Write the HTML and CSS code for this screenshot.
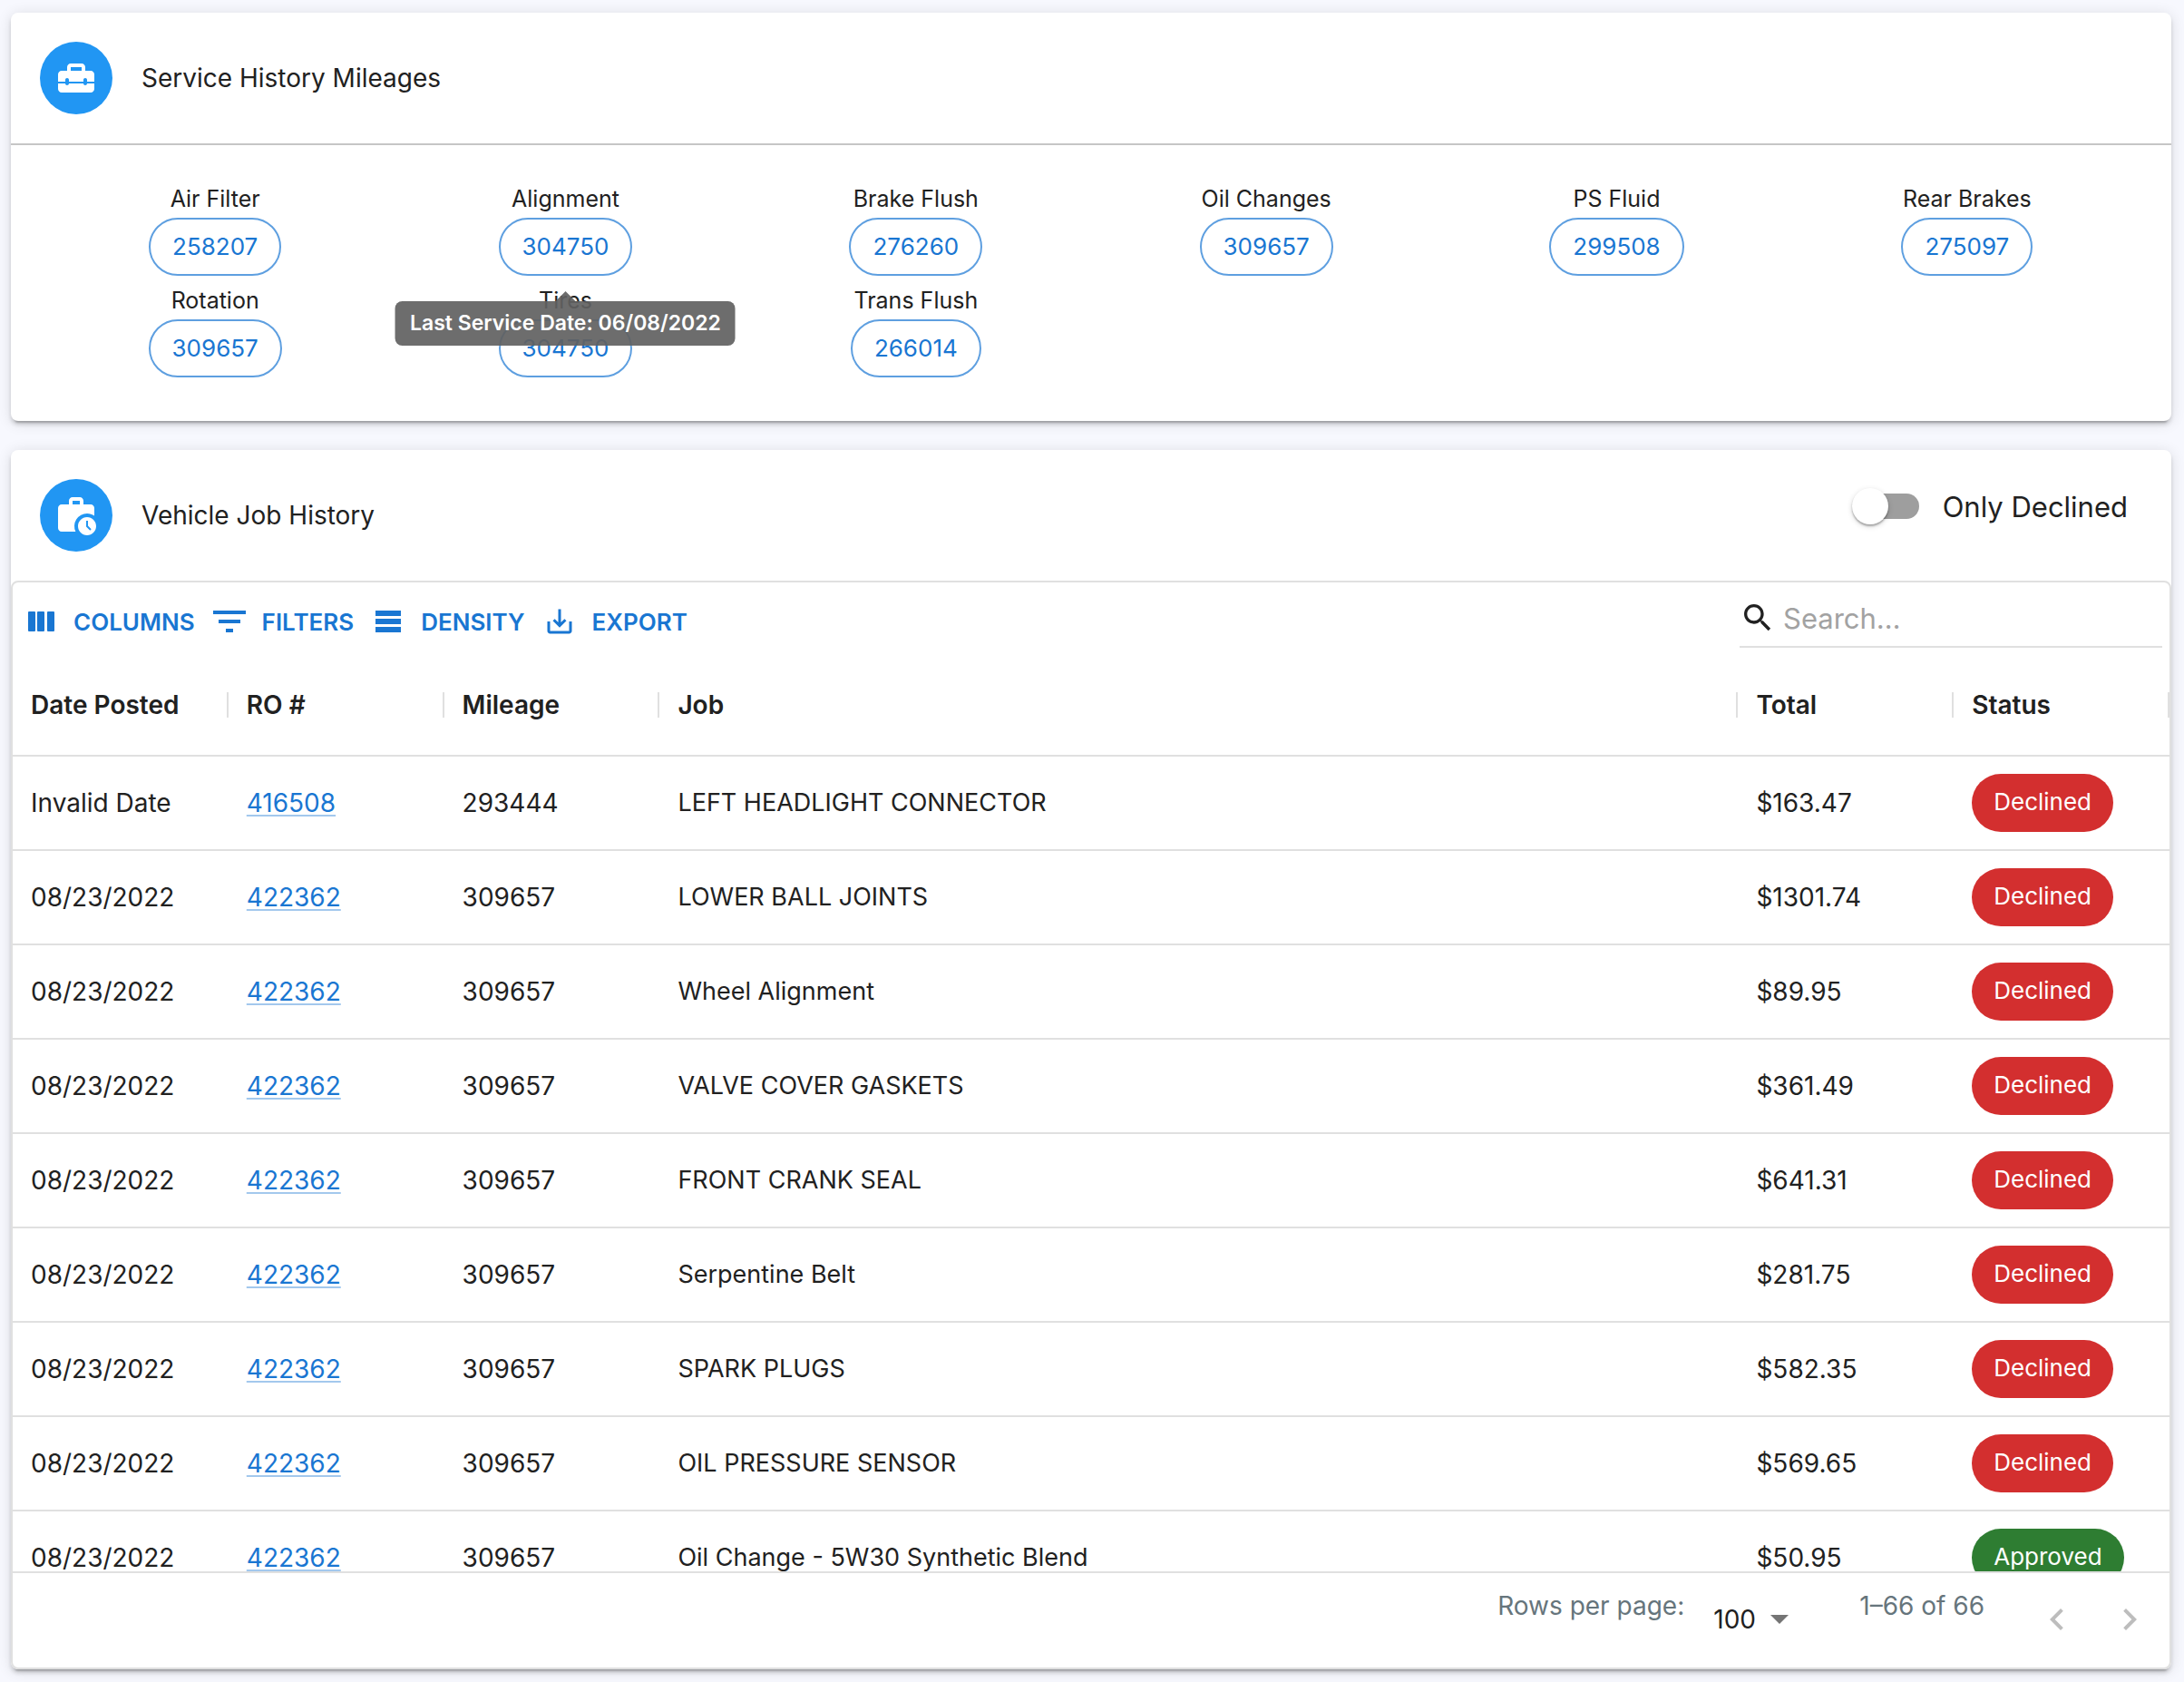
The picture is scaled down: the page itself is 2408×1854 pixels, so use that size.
FILE: index.html
```html
<!DOCTYPE html>
<html lang="en">
<head>
<meta charset="utf-8">
<title>Vehicle Service History</title>
<link rel="stylesheet" href="styles.css">
</head>
<body>
<main class="page">
  <section class="card">
    <header class="card-header card-header-ruled">
      <span class="avatar"><svg class="avatar-icon" viewBox="0 0 24 24" aria-hidden="true"><path d="M17 8V6c0-1.100-.9-2-2-2H9c-1.100 0-2 .9-2 2v2H4c-1.100 0-2 .9-2 2v4h4v-1c0-.55.45-1 1-1s1 .45 1 1v1h8v-1c0-.55.45-1 1-1s1 .45 1 1v1h4v-4c0-1.100-.9-2-2-2h-3zM9 6h6v2H9V6z"/><path d="M18 15c0 .55-.45 1-1 1s-1-.45-1-1H8c0 .55-.45 1-1 1s-1-.45-1-1H2v3c0 1.100.9 2 2 2h16c1.100 0 2-.9 2-2v-3h-4z"/></svg></span>
      <h2 class="card-title">Service History Mileages</h2>
    </header>
    <div class="mileages">
      <div class="mileage"><span class="mileage-label">Air Filter</span><button class="chip chip-outline" type="button">258207</button></div>
      <div class="mileage"><span class="mileage-label">Alignment</span><button class="chip chip-outline" type="button" aria-describedby="tip">304750</button><span class="tooltip" role="tooltip" id="tip">Last Service Date: 06/08/2022</span></div>
      <div class="mileage"><span class="mileage-label">Brake Flush</span><button class="chip chip-outline" type="button">276260</button></div>
      <div class="mileage"><span class="mileage-label">Oil Changes</span><button class="chip chip-outline" type="button">309657</button></div>
      <div class="mileage"><span class="mileage-label">PS Fluid</span><button class="chip chip-outline" type="button">299508</button></div>
      <div class="mileage"><span class="mileage-label">Rear Brakes</span><button class="chip chip-outline" type="button">275097</button></div>
      <div class="mileage"><span class="mileage-label">Rotation</span><button class="chip chip-outline" type="button">309657</button></div>
      <div class="mileage"><span class="mileage-label">Tires</span><button class="chip chip-outline" type="button">304750</button></div>
      <div class="mileage"><span class="mileage-label">Trans Flush</span><button class="chip chip-outline" type="button">266014</button></div>
    </div>
  </section>

  <section class="card card-fill">
    <header class="card-header">
      <span class="avatar"><svg class="avatar-icon" viewBox="0 0 24 24" aria-hidden="true"><path d="M18 11c1.490 0 2.870.47 4 1.260V8c0-1.110-.89-2-2-2h-4V4c0-1.110-.89-2-2-2h-4c-1.110 0-2 .89-2 2v2H4c-1.110 0-1.990.89-1.990 2L2 19c0 1.110.89 2 2 2h7.680A6.995 6.995 0 0 1 18 11zm-8-7h4v2h-4V4z"/><path d="M18 13c-2.760 0-5 2.240-5 5s2.240 5 5 5 5-2.240 5-5-2.240-5-5-5zm1.650 7.350L17.500 18.200V15h1v2.790l1.850 1.850-.7.710z"/></svg></span>
      <h2 class="card-title">Vehicle Job History</h2>
      <label class="switch"><input class="switch-input" type="checkbox" role="switch">Only Declined</label>
    </header>
    <div class="grid">
      <div class="toolbar">
        <button class="tool" type="button"><svg class="tool-icon" viewBox="0 0 36 36" aria-hidden="true"><rect x="4" y="7" width="8" height="22" rx="1"/><rect x="14" y="7" width="8" height="22" rx="1"/><rect x="25" y="7" width="8" height="22" rx="1"/></svg>COLUMNS</button>
        <button class="tool" type="button"><svg class="tool-icon" viewBox="0 0 36 36" aria-hidden="true"><path d="M0 6h36v4H0zM6 16h24v4H6zM14 26h8v4h-8z"/></svg>FILTERS</button>
        <button class="tool" type="button"><svg class="tool-icon" viewBox="0 0 36 36" aria-hidden="true"><path d="M4 6h28v6H4zM4 15h28v6H4zM4 24h28v6H4z"/></svg>DENSITY</button>
        <button class="tool" type="button"><svg class="tool-icon" viewBox="0 0 24 24" aria-hidden="true"><path d="M19 12v7H5v-7H3v7c0 1.100.9 2 2 2h14c1.100 0 2-.9 2-2v-7h-2zm-6 .67l2.590-2.580L17 11.500l-5 5-5-5 1.410-1.410L11 12.670V3h2z"/></svg>EXPORT</button>
        <label class="search"><svg class="search-icon" viewBox="0 0 24 24" aria-hidden="true"><path d="M15.500 14h-.79l-.28-.27C15.410 12.590 16 11.110 16 9.500 16 5.910 13.090 3 9.500 3S3 5.910 3 9.500 5.910 16 9.500 16c1.610 0 3.090-.59 4.230-1.570l.27.28v.79l5 4.990L20.490 19l-4.990-5zm-6 0C7.010 14 5 11.990 5 9.500S7.010 5 9.500 5 14 7.010 14 9.500 11.990 14 9.500 14z"/></svg><input class="search-input" type="search" placeholder="Search…" aria-label="Search"></label>
      </div>
      <div class="scroller">
        <table class="jobs">
          <colgroup><col class="col-narrow"><col class="col-narrow"><col class="col-narrow"><col><col class="col-narrow"><col class="col-narrow"></colgroup>
          <thead><tr><th scope="col">Date Posted</th><th scope="col">RO #</th><th scope="col">Mileage</th><th scope="col">Job</th><th scope="col">Total</th><th scope="col">Status</th></tr></thead>
          <tbody>
            <tr><td>Invalid Date</td><td><a class="ro" href="#416508">416508</a></td><td>293444</td><td class="job">LEFT HEADLIGHT CONNECTOR</td><td>$163.47</td><td><span class="chip chip-declined">Declined</span></td></tr>
            <tr><td>08/23/2022</td><td><a class="ro" href="#422362">422362</a></td><td>309657</td><td class="job">LOWER BALL JOINTS</td><td>$1301.74</td><td><span class="chip chip-declined">Declined</span></td></tr>
            <tr><td>08/23/2022</td><td><a class="ro" href="#422362">422362</a></td><td>309657</td><td class="job">Wheel Alignment</td><td>$89.95</td><td><span class="chip chip-declined">Declined</span></td></tr>
            <tr><td>08/23/2022</td><td><a class="ro" href="#422362">422362</a></td><td>309657</td><td class="job">VALVE COVER GASKETS</td><td>$361.49</td><td><span class="chip chip-declined">Declined</span></td></tr>
            <tr><td>08/23/2022</td><td><a class="ro" href="#422362">422362</a></td><td>309657</td><td class="job">FRONT CRANK SEAL</td><td>$641.31</td><td><span class="chip chip-declined">Declined</span></td></tr>
            <tr><td>08/23/2022</td><td><a class="ro" href="#422362">422362</a></td><td>309657</td><td class="job">Serpentine Belt</td><td>$281.75</td><td><span class="chip chip-declined">Declined</span></td></tr>
            <tr><td>08/23/2022</td><td><a class="ro" href="#422362">422362</a></td><td>309657</td><td class="job">SPARK PLUGS</td><td>$582.35</td><td><span class="chip chip-declined">Declined</span></td></tr>
            <tr><td>08/23/2022</td><td><a class="ro" href="#422362">422362</a></td><td>309657</td><td class="job">OIL PRESSURE SENSOR</td><td>$569.65</td><td><span class="chip chip-declined">Declined</span></td></tr>
            <tr><td>08/23/2022</td><td><a class="ro" href="#422362">422362</a></td><td>309657</td><td class="job">Oil Change - 5W30 Synthetic Blend</td><td>$50.95</td><td><span class="chip chip-approved">Approved</span></td></tr>
          </tbody>
        </table>
      </div>
      <footer class="pager">
        <label class="pager-text" for="rows">Rows per page:</label>
        <span class="select"><select class="select-input" id="rows"><option>100</option></select><svg class="select-arrow" viewBox="0 0 20 10" aria-hidden="true"><path d="M0 0l10 10L20 0z"/></svg></span>
        <span class="pager-text pager-range">1–66 of 66</span>
        <span class="pager-buttons">
          <button class="pager-button" type="button" aria-label="Previous page" disabled><svg class="pager-icon" viewBox="0 0 24 24" aria-hidden="true"><path d="M15.410 16.590L10.830 12l4.580-4.590L14 6l-6 6 6 6z"/></svg></button>
          <button class="pager-button" type="button" aria-label="Next page" disabled><svg class="pager-icon" viewBox="0 0 24 24" aria-hidden="true"><path d="M8.590 16.590L13.170 12 8.590 7.410 10 6l6 6-6 6z"/></svg></button>
        </span>
      </footer>
    </div>
  </section>
</main>
</body>
</html>
```

FILE: styles.css
```css
:root {
  --primary: #1976d2;
  --line: #e0e0e0;
  --ink: #212121;
}

* {
  box-sizing: border-box;
}

body {
  margin: 0;
  background: #f7f8fe;
  color: var(--ink);
  font-family: Inter, Roboto, sans-serif;
  font-size: 28px;
}

button,
input,
select {
  font: inherit;
  color: inherit;
}

svg {
  fill: currentColor;
}

.page {
  display: flex;
  flex-direction: column;
  gap: 32px;
  height: 100vh;
  min-height: 1200px;
  padding: 14px 14px 14px 12px;
}

.card {
  flex: none;
  background: #fff;
  border-radius: 8px;
  box-shadow: 0 6px 2px -4px rgba(0, 0, 0, 0.2), 0 4px 4px rgba(0, 0, 0, 0.14), 0 2px 16px rgba(0, 0, 0, 0.12);
}

.card-fill {
  display: flex;
  flex: 1;
  flex-direction: column;
  min-height: 0;
}

.card-header {
  display: flex;
  align-items: center;
  gap: 32px;
  padding: 32px;
}

.card-header-ruled {
  border-bottom: 2px solid #c6c6c6;
}

.avatar {
  display: grid;
  place-items: center;
  width: 80px;
  height: 80px;
  border-radius: 50%;
  background: #2196f3;
  color: #fff;
}

.avatar-icon {
  width: 48px;
  height: 48px;
}

.card-title {
  margin: 0;
  font-size: 28px;
  font-weight: 400;
}

/* Mileage chips */

.mileages {
  display: grid;
  grid-template-columns: repeat(6, 1fr);
  row-gap: 8px;
  padding: 40px 32px 48px;
}

.mileage {
  position: relative;
  display: flex;
  flex-direction: column;
  align-items: center;
}

.mileage-label {
  font-size: 25px;
  line-height: 38px;
  padding-bottom: 2px;
}

.chip {
  display: inline-flex;
  align-items: center;
  height: 64px;
  padding: 0 24px 2px;
  border: 0;
  border-radius: 32px;
  font-size: 26px;
}

.chip-outline {
  border: 2px solid #5e9fe0;
  background: none;
  color: var(--primary);
}

.chip-declined {
  background: #d32f2f;
  color: #fff;
}

.chip-approved {
  background: #2e7d32;
  color: #fff;
}

.tooltip {
  position: absolute;
  top: 132px;
  left: 50%;
  z-index: 2;
  padding: 0 16px;
  border-radius: 8px;
  background: rgba(97, 97, 97, 0.92);
  color: #fff;
  font-size: 23px;
  font-weight: 600;
  line-height: 49px;
  white-space: nowrap;
  transform: translateX(-50%);
}

.tooltip::before {
  content: "";
  position: absolute;
  bottom: 100%;
  left: 50%;
  margin-left: -11px;
  border: 11px solid transparent;
  border-top: 0;
  border-bottom-color: rgba(97, 97, 97, 0.92);
}

/* Declined switch */

.switch {
  display: flex;
  align-items: center;
  gap: 26px;
  margin: 0 16px 20px auto;
  font-size: 31px;
}

.switch-input {
  position: relative;
  width: 68px;
  height: 28px;
  margin: 0;
  border-radius: 14px;
  background: #9e9e9e;
  appearance: none;
}

.switch-input::before {
  content: "";
  position: absolute;
  top: -6px;
  left: -6px;
  width: 40px;
  height: 40px;
  border-radius: 50%;
  background: #fff;
  box-shadow: 0 2px 2px rgba(0, 0, 0, 0.28), 0 2px 6px rgba(0, 0, 0, 0.16);
}

.switch-input:checked::before {
  left: 34px;
}

/* Job grid */

.grid {
  display: flex;
  flex: 1;
  flex-direction: column;
  min-height: 0;
  border: 2px solid var(--line);
  border-radius: 8px;
}

.toolbar {
  display: flex;
  align-items: center;
  gap: 20px;
  height: 80px;
  padding: 0 8px 0 13px;
}

.tool {
  display: flex;
  align-items: center;
  gap: 18px;
  margin-top: 6px;
  padding: 0;
  border: 0;
  background: none;
  color: var(--primary);
  font-size: 26px;
  font-weight: 600;
}

.tool-icon {
  width: 36px;
  height: 36px;
}

.search {
  display: flex;
  align-items: center;
  gap: 8px;
  width: 466px;
  height: 64px;
  margin-left: auto;
  border-bottom: 2px solid var(--line);
}

.search-icon {
  flex: none;
  width: 40px;
  height: 40px;
}

.search-input {
  width: 100%;
  min-width: 0;
  padding: 0;
  border: 0;
  outline: 0;
  background: none;
  font-size: 31px;
}

.search-input::placeholder {
  color: #a2a2a2;
}

.scroller {
  flex: 1;
  min-height: 0;
  overflow: hidden auto;
  scrollbar-width: none;
}

.jobs {
  width: 100%;
  border-spacing: 0;
  table-layout: fixed;
}

.col-narrow {
  width: 10%;
}

.jobs th,
.jobs td {
  padding: 0 20px;
  border-bottom: 2px solid var(--line);
  text-align: left;
  white-space: nowrap;
}

.jobs th {
  position: sticky;
  top: 0;
  z-index: 1;
  height: 112px;
  background: #fff;
  font-size: 28px;
  font-weight: 600;
}

.jobs th::after {
  content: "";
  position: absolute;
  top: 41px;
  right: -2px;
  width: 4px;
  height: 28px;
  background: var(--line);
}

.jobs td {
  height: 104px;
  font-size: 28px;
  line-height: 28px;
}

.jobs .job {
  font-size: 27px;
}

.jobs .chip {
  vertical-align: middle;
}

.ro {
  color: var(--primary);
  text-decoration: underline;
  text-decoration-color: #a3c8ed;
  text-decoration-thickness: 2px;
  text-underline-offset: 3px;
  text-decoration-skip-ink: none;
}

/* Pager */

.pager {
  display: flex;
  align-items: flex-start;
  height: 106px;
  padding: 16px 20px 0;
  border-top: 2px solid var(--line);
  line-height: 40px;
}

.pager-text {
  color: #66757c;
  font-size: 28px;
}

.pager > label {
  margin-left: auto;
}

.select {
  display: flex;
  align-items: center;
  gap: 16px;
  margin: 15px 78px 0 32px;
}

.select-input {
  padding: 0;
  border: 0;
  background: none;
  appearance: none;
}

.select-arrow {
  width: 20px;
  height: 10px;
  color: #757575;
}

.pager-buttons {
  display: flex;
  gap: 32px;
  margin: 11px 0 0 56px;
}

.pager-button {
  display: grid;
  place-items: center;
  width: 48px;
  height: 48px;
  padding: 0;
  border: 0;
  background: none;
  color: #bdbdbd;
}

.pager-icon {
  width: 48px;
  height: 48px;
}
```
